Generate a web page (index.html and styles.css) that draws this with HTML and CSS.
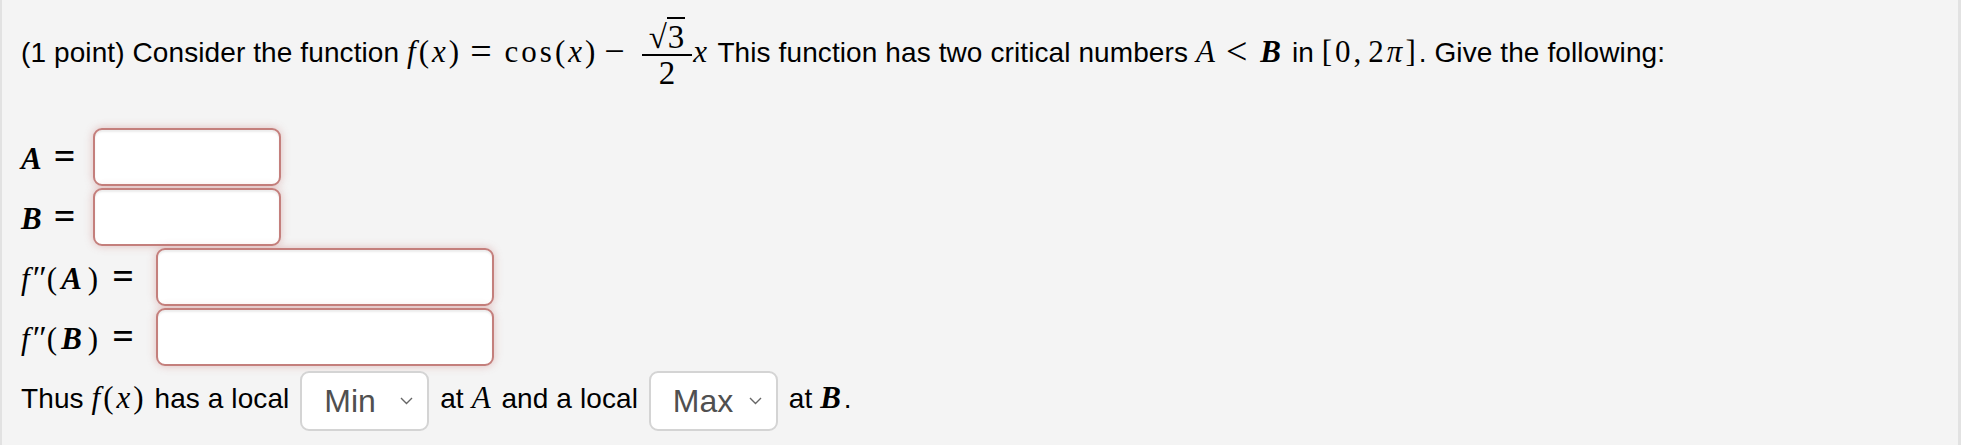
FILE: index.html
```html
<!DOCTYPE html>
<html lang="en">

<head>
  <meta charset="UTF-8">
  <meta name="viewport" content="width=device-width, initial-scale=1.0">
  <title>critical numbers</title>
  <link rel="stylesheet" href="styles.css">
</head>

<body>
  <div class="problem">
    <p class="statement">
      (1 point) Consider the function
      <span class="math"><var>f</var>(<var>x</var>)<span class="rel">=</span>cos(<var>x</var>)<span class="bin">&minus;</span><span class="frac"><span class="num"><span class="radical">&radic;</span><span class="radicand">3</span></span><span class="den">2</span></span><var>x</var></span>
      This function has two critical numbers
      <span class="math"><var>A</var><span class="rel">&lt;</span><var class="heavy">B</var></span>
      in <span class="math">[0,<span class="thin"></span>2<var>&pi;</var>]</span>. Give the following:
    </p>

    <div class="answers">
      <div class="answer-row">
        <span class="label label-short math"><var class="heavy">A</var><span class="eq">=</span></span>
        <input class="answer answer-short" type="text">
      </div>
      <div class="answer-row">
        <span class="label label-short math"><var class="heavy">B</var><span class="eq">=</span></span>
        <input class="answer answer-short" type="text">
      </div>
      <div class="answer-row">
        <span class="label math"><var>f</var><span class="prime">&Prime;</span>(<var class="heavy arg">A</var>)<span class="eq">=</span></span>
        <input class="answer answer-long" type="text">
      </div>
      <div class="answer-row">
        <span class="label math"><var>f</var><span class="prime">&Prime;</span>(<var class="heavy arg">B</var>)<span class="eq">=</span></span>
        <input class="answer answer-long" type="text">
      </div>
    </div>

    <p class="conclusion">
      Thus <span class="math"><var>f</var>(<var>x</var>)</span> has a local
      <span class="select"><span>Min</span><svg class="chevron" width="13" height="8" viewBox="0 0 13 8"><polyline points="1,1 6.5,6.5 12,1" /></svg></span>
      at <span class="math"><var>A</var></span> and a local
      <span class="select"><span>Max</span><svg class="chevron" width="13" height="8" viewBox="0 0 13 8"><polyline points="1,1 6.5,6.5 12,1" /></svg></span>
      at <span class="math"><var class="heavy">B</var></span>.
    </p>
  </div>
</body>

</html>
```

FILE: styles.css
```css
body {
  margin: 0;
  background-color: #FFFFFF;
  font-family: 'Liberation Sans', Arial, Helvetica, sans-serif;
  font-size: 28px;
  letter-spacing: 0.1px;
  color: #000000;
}

.problem {
  box-sizing: border-box;
  width: 1961px;
  min-height: 445px;
  padding: 0 0 0 19px;
  background-color: #F4F4F4;
  border-left: 2px solid #E2E2E2;
  border-right: 3px solid #E2E2E2; /* panel edge, page is white beyond it */
}

.statement {
  margin: 0;
  padding-top: 22px;
  line-height: 40px;
}

/* math bits, set in a Times-like face */
.math {
  font-family: 'Liberation Serif', 'Times New Roman', serif;
  font-size: 31px;
  letter-spacing: 3px;
  white-space: nowrap;
}

.math var {
  font-style: italic;
}

.math var.heavy {
  font-weight: bold;
}

.rel {
  font-size: 38px;
  vertical-align: -2px;
  margin: 0 10px 0 8px;
}

.bin {
  font-size: 36px;
  vertical-align: -1px;
  margin: 0 10px 0 6px;
}

.thin {
  margin-right: 4px;
}

.frac {
  display: inline-flex;
  flex-direction: column;
  align-items: center;
  vertical-align: middle;
  margin: 0 1px 0 4px;
  font-size: 33px;
  letter-spacing: 0;
  line-height: 30px;
}

.num {
  padding: 0 7px 2px;
  border-bottom: 2px solid #000000;
}

.radical {
  font-style: normal;
}

.radicand {
  border-top: 2px solid #000000;
  padding: 0 1px;
}

.den {
  padding-top: 2px;
}

.answers {
  margin-top: 39px;
}

.answer-row {
  display: flex;
  align-items: center;
  height: 60px;
}

.label {
  display: inline-flex;
  align-items: baseline;
  padding-bottom: 3px;
}

.label .arg {
  margin: 0 3px 0 1px;
}

.prime {
  font-size: 34px;
  letter-spacing: 0;
}

.eq {
  font-size: 38px;
  font-weight: bold;
  margin: 0 19px 0 11px;
}

.label-short .eq {
  margin: 0 15px 0 9px;
}

.answer {
  box-sizing: border-box;
  height: 58px;
  border: 2px solid #C47F7C;
  border-radius: 9px;
  background-color: #FFFFFF;
  box-shadow: inset 0 2px 2px rgba(0, 0, 0, 0.08), 0 0 8px rgba(197, 115, 111, 0.42);
  outline: none;
}

.answer-short {
  width: 188px;
}

.answer-long {
  width: 338px;
}

.conclusion {
  margin: 1px 0 0;
  line-height: 60px;
}

.select {
  display: inline-flex;
  align-items: center;
  justify-content: space-between;
  box-sizing: border-box;
  width: 129px;
  height: 60px;
  margin: 0 3px;
  padding: 0 14px 0 22px;
  vertical-align: middle;
  border: 2px solid #D4D4D4;
  border-radius: 9px;
  background-color: #FFFFFF;
  color: #505050;
  font-size: 32px;
  letter-spacing: 0;
  line-height: 1;
}

.chevron polyline {
  fill: none;
  stroke: #666666;
  stroke-width: 1.4;
}
```
